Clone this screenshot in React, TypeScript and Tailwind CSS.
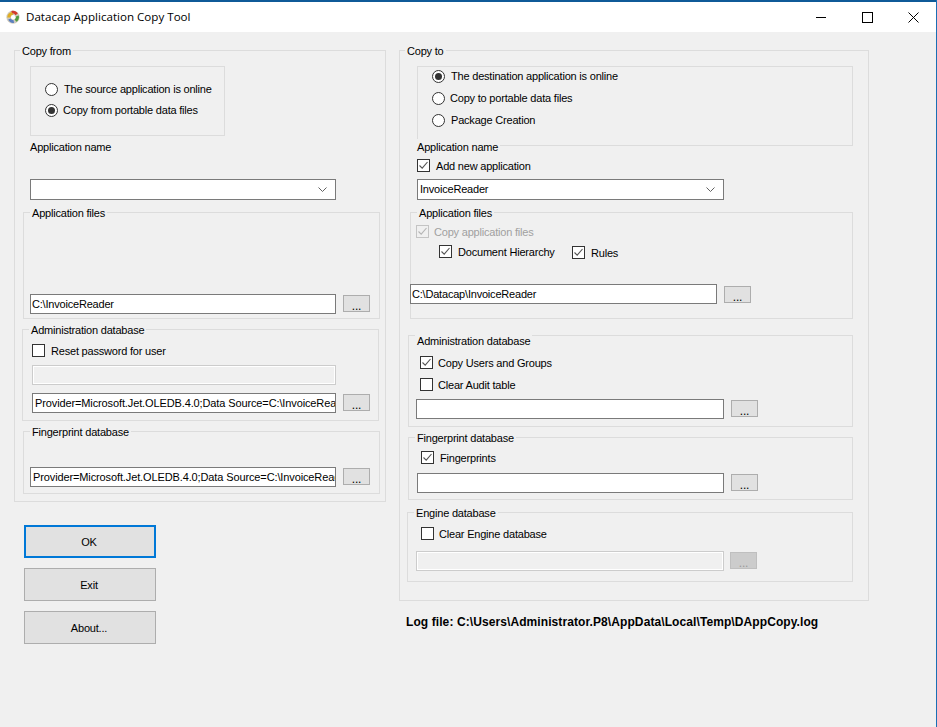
import React from "react";

const Chevron = () => (
  <svg width="9" height="5" viewBox="0 0 9 5" fill="none" className="shrink-0">
    <path d="M0.5 0.5L4.5 4.5L8.5 0.5" stroke="#606060" strokeWidth="1" />
  </svg>
);

function Radio({ on, label, className = "", gap = "gap-[6px]" }: { on?: boolean; label: string; className?: string; gap?: string }) {
  return (
    <div className={`flex items-center h-4 ${gap} ${className}`}>
      <span className="w-[13px] h-[13px] rounded-full border border-[#333333] bg-white flex items-center justify-center shrink-0">
        {on && <span className="w-[7px] h-[7px] rounded-full bg-[#333333]" />}
      </span>
      <span className="whitespace-nowrap">{label}</span>
    </div>
  );
}

function Check({ on, disabled, label, className = "", gap = "gap-[6px]" }: { on?: boolean; disabled?: boolean; label: string; className?: string; gap?: string }) {
  return (
    <div className={`flex items-center h-[13px] ${gap} ${className}`}>
      <span className={`w-[13px] h-[13px] border shrink-0 flex items-center justify-center ${disabled ? "border-[#c4c4c4] bg-[#f0f0f0]" : "border-[#333333] bg-white"}`}>
        {on && (
          <svg width="11" height="11" viewBox="0 0 11 11" fill="none">
            <path d="M1.5 5.5L4.2 8.2L9.5 2" stroke={disabled ? "#b5b5b5" : "#555555"} strokeWidth="1.1" />
          </svg>
        )}
      </span>
      <span className={`whitespace-nowrap ${disabled ? "text-[#a0a0a0]" : ""}`}>{label}</span>
    </div>
  );
}

function Field({ text, className = "", pad = "pl-[1px]", disabled }: { text?: string; className?: string; pad?: string; disabled?: boolean }) {
  return (
    <div className={`h-5 border flex items-center overflow-hidden whitespace-nowrap shrink-0 ${pad} ${disabled ? "border-[#cccccc] bg-[#f0f0f0] shadow-[inset_0_0_0_1px_#ffffff]" : "border-[#7a7a7a] bg-white"} ${className}`}>
      {text}
    </div>
  );
}

function Browse({ disabled, className = "ml-[7px] mt-[1px]" }: { disabled?: boolean; className?: string }) {
  return (
    <div className={`w-[27px] h-[17px] border flex justify-center text-[12px] leading-[20px] shrink-0 ${disabled ? "bg-[#cccccc] border-[#bfbfbf] text-[#9a9a9a]" : "bg-[#e1e1e1] border-[#adadad]"} ${className}`}>
      ...
    </div>
  );
}

function Combo({ text, className = "" }: { text?: string; className?: string }) {
  return (
    <div className={`h-[21px] border border-[#7a7a7a] bg-white flex items-center justify-between pl-[2px] pr-[8px] ${className}`}>
      <span className="pb-[2px]">{text}</span>
      <Chevron />
    </div>
  );
}

function Group({ title, className = "", legend = "ml-[6px] h-4", children }: { title: string; className?: string; legend?: string; children?: React.ReactNode }) {
  return (
    <div className={`border border-[#dcdcdc] shrink-0 ${className}`}>
      <div className={`-mt-2 w-fit px-[2px] bg-[#f0f0f0] whitespace-nowrap ${legend}`}>{title}</div>
      {children}
    </div>
  );
}

function ActionButton({ label, focus }: { label: string; focus?: boolean }) {
  return (
    <div className={`w-[132px] h-[33px] bg-[#e1e1e1] flex items-center justify-center pr-[2px] ${focus ? "border-2 border-[#0078d7]" : "border border-[#adadad]"}`}>
      {label}
    </div>
  );
}

const AppIcon = () => (
  <svg width="16" height="16" viewBox="0 0 16 16" fill="none" className="shrink-0">
    <circle cx="8" cy="8.2" r="6.6" fill="#cfcabc" />
    <path d="M2.2 8.5C2.4 5.4 4.2 3.6 6.8 3L8.4 5.6C6.8 6 5.8 7 5.4 8.5Z" fill="#e0ad22" />
    <path d="M6.2 2.2C8.6 1.2 11.4 2.2 12.8 4.6L10.4 6.2C9.6 5 8.6 4.6 7.6 4.6Z" fill="#d43a2a" />
    <path d="M13.8 6.4C14.4 9 13.4 11.4 11.4 12.8L9.6 10.6C10.6 9.8 11 8.8 10.9 7.4Z" fill="#4e9c3e" />
    <path d="M3.2 10.6L5.8 9.6C6.4 10.6 7.4 11.2 8.6 11.2L9 14C6.4 14.4 4.2 13 3.2 10.6Z" fill="#5a7fc0" />
    <circle cx="8.2" cy="8.2" r="2.2" fill="#ffffff" />
  </svg>
);

export default function App() {
  return (
    <div className="w-[937px] h-[727px] overflow-hidden bg-[#f0f0f0] text-black text-[11px] tracking-[-0.2px] leading-4 font-['Liberation_Sans',sans-serif] flex flex-col border-r border-r-[#1a6fb5]">
      <div className="h-8 bg-white border-t-2 border-[#0f5a98] flex items-center shrink-0">
        <div className="flex items-center pl-[5px] gap-[5px] font-['Open_Sans',sans-serif] tracking-normal">
          <AppIcon />
          <span className="text-[11.6px]">Datacap Application Copy Tool</span>
        </div>
        <div className="ml-auto flex h-full">
          <div className="w-[46px] flex items-center justify-center">
            <span className="w-[10px] h-px bg-black" />
          </div>
          <div className="w-[46px] flex items-center justify-center">
            <span className="w-[11px] h-[11px] border border-black" />
          </div>
          <div className="w-[46px] flex items-center justify-center">
            <svg width="11" height="11" viewBox="0 0 11 11" fill="none">
              <path d="M0.5 0.5L10.5 10.5M10.5 0.5L0.5 10.5" stroke="#000" strokeWidth="1" />
            </svg>
          </div>
        </div>
      </div>

      <div className="flex items-start pt-[18px]">
        {/* Left column */}
        <div className="ml-[14px] w-[372px] shrink-0 flex flex-col">
          <Group title="Copy from" className="w-[372px] h-[452px]" legend="ml-[5px] h-4">
            <div className="ml-[15px] mt-[7px] w-[195px] h-[70px] border border-[#dcdcdc] pt-[14px] pl-[14px]">
              <Radio label="The source application is online" />
              <Radio on label="Copy from portable data files" className="mt-[5px]" gap="gap-[5px]" />
            </div>
            <div className="ml-[15px] mt-[3px]">Application name</div>
            <Combo className="ml-[15px] mt-[24px] w-[306px]" />
            <Group title="Application files" className="ml-[8px] mt-[12px] w-[357px] h-[107px]">
              <div className="ml-[6px] mt-[73px] flex items-start">
                <Field text="C:\InvoiceReader" className="w-[306px]" />
                <Browse />
              </div>
            </Group>
            <Group title="Administration database" className="ml-[7px] mt-[10px] w-[357px] h-[92px]">
              <Check label="Reset password for user" className="ml-[9px] mt-[6px]" />
              <Field disabled className="ml-[9px] mt-[8px] w-[304px]" />
              <div className="ml-[9px] mt-[8px] flex items-start">
                <Field text="Provider=Microsoft.Jet.OLEDB.4.0;Data Source=C:\InvoiceReader" pad="pl-[2px] tracking-[-0.12px]" className="w-[304px]" />
                <Browse />
              </div>
            </Group>
            <Group title="Fingerprint database" className="ml-[8px] mt-[10px] w-[357px] h-[63px]">
              <div className="ml-[6px] mt-[27px] flex items-start">
                <Field text="Provider=Microsoft.Jet.OLEDB.4.0;Data Source=C:\InvoiceReader" pad="pl-[2px] tracking-[-0.12px]" className="w-[306px]" />
                <Browse />
              </div>
            </Group>
          </Group>
          <div className="ml-[10px] mt-[23px] flex flex-col gap-[10px]">
            <ActionButton focus label="OK" />
            <ActionButton label="Exit" />
            <ActionButton label="About..." />
          </div>
        </div>

        {/* Right column */}
        <div className="ml-[13px] w-[470px] shrink-0 flex flex-col">
          <Group title="Copy to" className="w-[470px] h-[551px]" legend="ml-[5px] h-4">
            <div className="ml-[17px] mt-[7px] w-[436px] h-[80px] border border-[#dcdcdc] pt-[1px] pl-[14px]">
              <Radio on label="The destination application is online" />
              <Radio label="Copy to portable data files" className="mt-[6px]" gap="gap-[5px]" />
              <Radio label="Package Creation" className="mt-[6px]" />
            </div>
            <div className="ml-[17px] -mt-[7px] w-fit h-4 pr-[2px] bg-[#f0f0f0]">Application name</div>
            <Check on label="Add new application" className="ml-[17px] mt-[4px]" />
            <Combo text="InvoiceReader" className="ml-[17px] mt-[7px] w-[307px]" />
            <Group title="Application files" className="ml-[10px] mt-[12px] w-[443px] h-[107px]">
              <Check disabled on label="Copy application files" className="ml-[5px] mt-[4px]" gap="gap-[5px]" />
              <div className="ml-[28px] mt-[7px] flex items-start">
                <Check on label="Document Hierarchy" className="w-[133px]" />
                <Check on label="Rules" className="mt-[1px]" />
              </div>
              <div className="-ml-[1px] mt-[25px] flex items-start">
                <Field text="C:\Datacap\InvoiceReader" className="w-[307px]" />
                <Browse className="ml-[7px] mt-[2px]" />
              </div>
            </Group>
            <Group title="Administration database" className="ml-[8px] mt-[16px] w-[445px] h-[92px]" legend="ml-[6px] h-[21px] pt-[5px]">
              <Check on label="Copy Users and Groups" className="ml-[11px] mt-[7px]" gap="gap-[5px]" />
              <Check label="Clear Audit table" className="ml-[11px] mt-[9px]" gap="gap-[5px]" />
              <div className="ml-[7px] mt-[8px] flex items-start">
                <Field className="w-[308px]" />
                <Browse />
              </div>
            </Group>
            <Group title="Fingerprint database" className="ml-[8px] mt-[10px] w-[445px] h-[63px]">
              <Check on label="Fingerprints" className="ml-[12px] mt-[5px]" />
              <div className="ml-[8px] mt-[9px] flex items-start">
                <Field className="w-[307px]" />
                <Browse />
              </div>
            </Group>
            <Group title="Engine database" className="ml-[7px] mt-[12px] w-[446px] h-[70px]">
              <Check label="Clear Engine database" className="ml-[13px] mt-[6px]" gap="gap-[5px]" />
              <div className="ml-[8px] mt-[11px] flex items-start">
                <Field disabled className="w-[308px]" />
                <Browse disabled className="ml-[6px] mt-[1px]" />
              </div>
            </Group>
          </Group>
          <div className="ml-[7px] mt-[13px] text-[12px] font-bold tracking-[0.09px] whitespace-nowrap">Log file: C:\Users\Administrator.P8\AppData\Local\Temp\DAppCopy.log</div>
        </div>
      </div>
    </div>
  );
}
